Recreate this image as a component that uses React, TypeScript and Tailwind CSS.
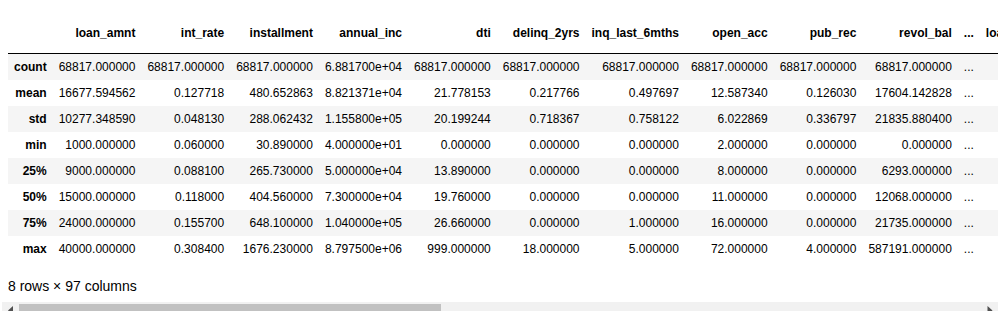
import React from "react";

const cols = [
  "loan_amnt",
  "int_rate",
  "installment",
  "annual_inc",
  "dti",
  "delinq_2yrs",
  "inq_last_6mths",
  "open_acc",
  "pub_rec",
  "revol_bal",
];

const rows: [string, string[]][] = [
  ["count", ["68817.000000", "68817.000000", "68817.000000", "6.881700e+04", "68817.000000", "68817.000000", "68817.000000", "68817.000000", "68817.000000", "68817.000000"]],
  ["mean", ["16677.594562", "0.127718", "480.652863", "8.821371e+04", "21.778153", "0.217766", "0.497697", "12.587340", "0.126030", "17604.142828"]],
  ["std", ["10277.348590", "0.048130", "288.062432", "1.155800e+05", "20.199244", "0.718367", "0.758122", "6.022869", "0.336797", "21835.880400"]],
  ["min", ["1000.000000", "0.060000", "30.890000", "4.000000e+01", "0.000000", "0.000000", "0.000000", "2.000000", "0.000000", "0.000000"]],
  ["25%", ["9000.000000", "0.088100", "265.730000", "5.000000e+04", "13.890000", "0.000000", "0.000000", "8.000000", "0.000000", "6293.000000"]],
  ["50%", ["15000.000000", "0.118000", "404.560000", "7.300000e+04", "19.760000", "0.000000", "0.000000", "11.000000", "0.000000", "12068.000000"]],
  ["75%", ["24000.000000", "0.155700", "648.100000", "1.040000e+05", "26.660000", "0.000000", "1.000000", "16.000000", "0.000000", "21735.000000"]],
  ["max", ["40000.000000", "0.308400", "1676.230000", "8.797500e+06", "999.000000", "18.000000", "5.000000", "72.000000", "4.000000", "587191.000000"]],
];

const last = ["68817.000000", "0.801183", "0.399112", "0.000000", "1.000000", "1.000000", "1.000000", "1.000000"];

export default function App() {
  return (
    <div className="w-[1004px] h-[311px] overflow-hidden bg-white font-['Liberation_Sans',Arial,sans-serif] text-black">
      <div className="ml-[2px] w-[996px]">
        <div className="overflow-hidden pl-[6px] pt-[13px]">
          <table className="border-separate border-spacing-0 text-[12px] leading-[14px] whitespace-nowrap">
            <thead>
              <tr>
                <th className="border-b border-black px-[6px] py-[13px] text-right font-bold"></th>
                {cols.map((c) => (
                  <th key={c} className="border-b border-black px-[6px] py-[13px] text-right font-bold">
                    {c}
                  </th>
                ))}
                <th className="border-b border-black px-[6px] py-[13px] text-right font-bold">...</th>
                <th className="border-b border-black px-[6px] py-[13px] text-right font-bold">loan_status_Fully_Paid</th>
              </tr>
            </thead>
            <tbody>
              {rows.map(([label, vals], i) => (
                <tr key={label} className={i % 2 === 0 ? "bg-[#f5f5f5]" : "bg-white"}>
                  <th className="px-[6px] py-[6px] text-right font-bold">{label}</th>
                  {vals.map((v, j) => (
                    <td key={j} className="px-[6px] py-[6px] text-right">
                      {v}
                    </td>
                  ))}
                  <td className="px-[6px] py-[6px] text-right">...</td>
                  <td className="px-[6px] py-[6px] text-right">{last[i]}</td>
                </tr>
              ))}
            </tbody>
          </table>
          <p className="mt-[14px] text-[14px] leading-[20px]">8 rows × 97 columns</p>
        </div>
        <div className="mt-[6px] flex h-[17px] w-full bg-[#f1f1f1]">
          <div className="h-[17px] w-[17px] shrink-0">
            <svg width="17" height="17" viewBox="0 0 17 17">
              <polygon points="11,4 6,8.5 11,13" fill="#505050" />
            </svg>
          </div>
          <div className="flex-1 pt-[2px]">
            <div className="h-[13px] w-[422px] bg-[#c1c1c1]"></div>
          </div>
          <div className="h-[17px] w-[17px] shrink-0">
            <svg width="17" height="17" viewBox="0 0 17 17">
              <polygon points="6.5,4 11.5,8.5 6.5,13" fill="#505050" />
            </svg>
          </div>
        </div>
      </div>
    </div>
  );
}
